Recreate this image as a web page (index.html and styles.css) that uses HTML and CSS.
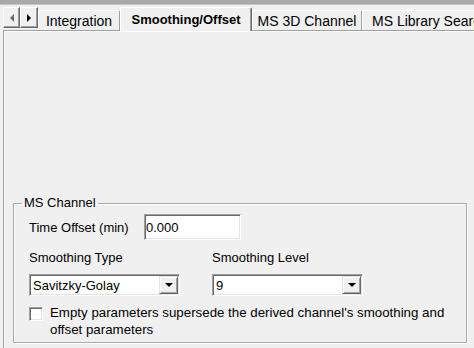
FILE: index.html
```html
<!DOCTYPE html>
<html lang="en">
<head>
    <meta charset="UTF-8">
    <title>Smoothing/Offset</title>
    <link rel="stylesheet" href="styles.css">
</head>
<body>
    <div class="topbar"></div>
    <div class="tabstrip">
        <div class="scroll">
            <button class="scroll-btn"><span class="arrow-left"></span></button>
            <button class="scroll-btn"><span class="arrow-right"></span></button>
        </div>
        <div class="tab tab-integration">Integration</div>
        <div class="tab tab-smoothing active">Smoothing/Offset</div>
        <div class="tab tab-3d">MS 3D Channel</div>
        <div class="tab tab-library">MS Library Search</div>
    </div>
    <div class="page">
        <fieldset class="group">
            <legend>MS Channel</legend>
            <div class="group-body">
                <div class="offset-row">
                    <label class="offset-label">Time Offset (min)</label>
                    <input class="textbox" type="text" value="0.000">
                </div>
                <div class="combos">
                    <div class="combo-col">
                        <label class="combo-label">Smoothing Type</label>
                        <div class="combo">
                            <span class="combo-value">Savitzky-Golay</span>
                            <span class="combo-btn"><span class="arrow-down"></span></span>
                        </div>
                    </div>
                    <div class="combo-col">
                        <label class="combo-label">Smoothing Level</label>
                        <div class="combo">
                            <span class="combo-value">9</span>
                            <span class="combo-btn"><span class="arrow-down"></span></span>
                        </div>
                    </div>
                </div>
                <div class="check-row">
                    <input class="check" type="checkbox">
                    <span class="check-label">Empty parameters supersede the derived channel's smoothing and<br>offset parameters</span>
                </div>
            </div>
        </fieldset>
    </div>
</body>
</html>
```

FILE: styles.css
```css
* {
    margin: 0;
    padding: 0;
    box-sizing: border-box;
}
body {
    width: 474px;
    height: 348px;
    overflow: hidden;
    display: flex;
    flex-direction: column;
    background-color: #f0f0f0;
    font-family: "Liberation Sans", Arial, sans-serif;
    font-size: 13px;
    color: #000;
}
.topbar {
    height: 5px;
    flex-shrink: 0;
    background-color: #a9a9a9;
    border-bottom: 1px solid #c4c4c4;
}
.tabstrip {
    display: flex;
    align-items: flex-end;
    height: 25px;
    flex-shrink: 0;
    padding-left: 3px;
    position: relative;
    z-index: 1;
}
.scroll {
    display: flex;
    flex-shrink: 0;
    align-self: flex-start;
    margin-top: 2px;
}
.scroll-btn {
    width: 17px;
    height: 21px;
    display: flex;
    align-items: center;
    justify-content: center;
    background-color: #f0f0f0;
    border: 1px solid;
    border-color: #fff #696969 #696969 #fff;
    box-shadow: inset -1px -1px 0 #a0a0a0;
}
.scroll-btn + .scroll-btn {
    width: 18px;
}
.arrow-left {
    width: 0;
    height: 0;
    border-top: 4px solid transparent;
    border-bottom: 4px solid transparent;
    border-right: 4px solid #6d6d6d;
}
.arrow-right {
    width: 0;
    height: 0;
    border-top: 4px solid transparent;
    border-bottom: 4px solid transparent;
    border-left: 4px solid #000;
}
.tab {
    flex-shrink: 0;
    height: 20px;
    padding-top: 1px;
    line-height: 18px;
    font-size: 14px;
    text-align: center;
    white-space: nowrap;
    border: 1px solid;
    border-bottom: none;
    border-color: #fff #a0a0a0 transparent #fff;
    border-radius: 2px 2px 0 0;
}
.tab-integration {
    width: 82px;
}
.tab-smoothing {
    width: 132px;
}
.tab-3d {
    width: 110px;
}
.tab-library {
    width: 136px;
}
.tab.active {
    height: 24px;
    margin-bottom: -1px;
    padding-top: 3px;
    font-size: 13px;
    font-weight: bold;
    background-color: #f0f0f0;
    border-color: #fff #696969 transparent #fff;
    box-shadow: inset -1px 0 0 #a0a0a0;
}
.page {
    flex: 1;
    margin-left: 3px;
    padding: 165px 0 0 9px;
    border-top: 1px solid #a0a0a0;
    border-left: 1px solid #a0a0a0;
    box-shadow: inset 1px 1px 0 #fff;
}
.group {
    width: 454px;
    padding: 0 8px 4px 8px;
    border: 1px solid #aaaaaa;
    box-shadow: 1px 1px 0 #fff, inset 1px 1px 0 #fff;
}
.group legend {
    padding: 0 2px;
    line-height: 14px;
}
.group-body {
    padding-left: 7px;
}
.offset-row {
    display: flex;
    align-items: center;
    margin-top: 4px;
    height: 26px;
}
.offset-label {
    width: 115px;
}
.textbox {
    width: 97px;
    height: 26px;
    padding-left: 1px;
    font-family: inherit;
    font-size: 13px;
    background-color: #fff;
    border: 1px solid;
    border-color: #a0a0a0 #fff #fff #a0a0a0;
    box-shadow: inset 1px 1px 0 #696969, inset -1px -1px 0 #e3e3e3;
    outline: none;
}
.combos {
    display: grid;
    grid-template-columns: 151px 151px;
    column-gap: 32px;
    margin-top: 10px;
}
.combo-label {
    display: block;
    line-height: 15px;
    margin-bottom: 9px;
}
.combo {
    display: flex;
    align-items: center;
    height: 22px;
    padding: 1px;
    background-color: #fff;
    border: 1px solid;
    border-color: #a0a0a0 #fff #fff #a0a0a0;
    box-shadow: inset 1px 1px 0 #696969, inset -1px -1px 0 #e3e3e3;
}
.combo-value {
    flex: 1;
    padding-left: 2px;
}
.combo-btn {
    width: 19px;
    height: 18px;
    display: flex;
    align-items: center;
    justify-content: center;
    background-color: #f0f0f0;
    border: 1px solid;
    border-color: #e3e3e3 #696969 #696969 #e3e3e3;
    box-shadow: inset 1px 1px 0 #fff, inset -1px -1px 0 #a0a0a0;
}
.arrow-down {
    width: 0;
    height: 0;
    border-left: 4px solid transparent;
    border-right: 4px solid transparent;
    border-top: 4px solid #000;
}
.check-row {
    display: flex;
    align-items: flex-start;
    margin-top: 8px;
}
.check {
    appearance: none;
    width: 14px;
    height: 14px;
    margin-top: 3px;
    flex-shrink: 0;
    background-color: #fff;
    border: 1px solid;
    border-color: #a0a0a0 #fff #fff #a0a0a0;
    box-shadow: inset 1px 1px 0 #696969, inset -1px -1px 0 #e3e3e3;
}
.check-label {
    margin-left: 7px;
    font-size: 13.3px;
    line-height: 17px;
}
```
